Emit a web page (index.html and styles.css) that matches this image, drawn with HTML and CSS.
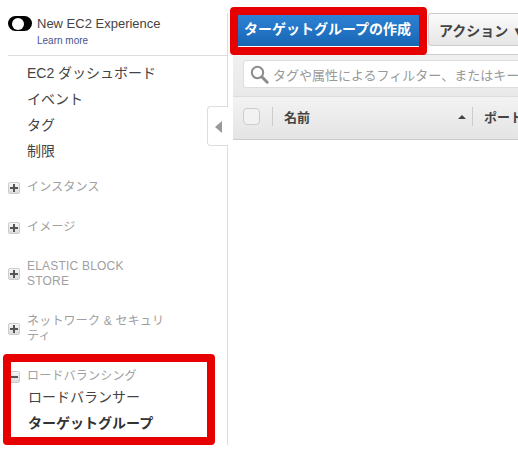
FILE: index.html
```html
<!DOCTYPE html>
<html lang="ja">
<head>
    <meta charset="UTF-8">
    <title>ターゲットグループ</title>
    <link rel="stylesheet" href="styles.css">
</head>
<body>
    <div class="page">
        <aside class="sidebar">
            <div class="experience">
                <span class="toggle"><span class="toggle-knob"></span></span>
                <div>
                    <div class="experience-title">New EC2 Experience</div>
                    <div class="experience-link">Learn more</div>
                </div>
            </div>

            <nav class="top-links">
                <div class="nav-link">EC2 ダッシュボード</div>
                <div class="nav-link">イベント</div>
                <div class="nav-link">タグ</div>
                <div class="nav-link">制限</div>
            </nav>

            <div class="nav-group group-instances">
                <span class="expander plus"></span>
                <span class="group-label">インスタンス</span>
            </div>
            <div class="nav-group group-images">
                <span class="expander plus"></span>
                <span class="group-label">イメージ</span>
            </div>
            <div class="nav-group group-ebs">
                <span class="expander plus"></span>
                <span class="group-label">ELASTIC BLOCK<br>STORE</span>
            </div>
            <div class="nav-group group-network">
                <span class="expander plus"></span>
                <span class="group-label">ネットワーク &amp; セキュリ<br>ティ</span>
            </div>
            <div class="nav-group group-lb">
                <span class="expander minus"></span>
                <span class="group-label">ロードバランシング</span>
            </div>
            <div class="nav-link sub-link">ロードバランサー</div>
            <div class="nav-link sub-link current">ターゲットグループ</div>
        </aside>

        <main class="content">
            <div class="toolbar">
                <button class="btn-create">ターゲットグループの作成</button>
                <button class="btn-actions">アクション<span class="caret">▾</span></button>
            </div>
            <div class="filter-bar">
                <div class="filter-input">
                    <svg class="search-icon" width="19" height="19" viewBox="0 0 19 19">
                        <circle cx="7.5" cy="7.5" r="5.7" fill="none" stroke="#8c8c8c" stroke-width="2"/>
                        <path d="M12 12l5.2 5.2" stroke="#8c8c8c" stroke-width="3" stroke-linecap="round"/>
                    </svg>
                    <span class="filter-text">タグや属性によるフィルター、またはキーワードによる検索</span>
                </div>
            </div>
            <div class="table-head">
                <span class="checkbox"></span>
                <span class="col-sep"></span>
                <span class="col-name">名前</span>
                <span class="sort-arrow"></span>
                <span class="col-sep col-sep-near"></span>
                <span class="col-port">ポート</span>
            </div>
        </main>
    </div>

    <div class="collapse-tab"><span class="collapse-arrow"></span></div>
    <div class="mark mark-create"></div>
    <div class="mark mark-nav"></div>
</body>
</html>
```

FILE: styles.css
```css
body {
    margin: 0;
    background: #fff;
    font-family: "Liberation Sans", "Noto Sans CJK JP", sans-serif;
    color: #444;
    overflow: hidden;
}

.page {
    display: flex;
    width: 518px;
    height: 449px;
    overflow: hidden;
}

.sidebar {
    flex: none;
    box-sizing: border-box;
    width: 228px;
    height: 432px;
    margin-top: 13px;
    border-right: 1px solid #ddd;
}

.experience {
    display: flex;
    gap: 5px;
    margin-left: 8px;
    height: 42px;
    border-bottom: 1px solid #ddd;
}

.toggle {
    flex: none;
    display: flex;
    align-items: center;
    box-sizing: border-box;
    width: 24px;
    height: 15px;
    margin-top: 3px;
    padding-left: 4px;
    background: #000;
    border-radius: 8px;
}

.toggle-knob {
    display: block;
    width: 12px;
    height: 12px;
    background: #fff;
    border-radius: 50%;
}

.experience-title {
    font-size: 13px;
    line-height: 21px;
    color: #444;
}

.experience-link {
    font-size: 10px;
    line-height: 12px;
    margin-top: 1px;
    color: #45558f;
}

.top-links {
    padding-top: 4px;
}

.nav-link {
    padding-left: 27px;
    font-size: 14px;
    line-height: 26px;
    color: #444;
}

.nav-group {
    display: flex;
    align-items: center;
    gap: 7px;
    padding-left: 8px;
}

.group-instances { margin-top: 16px; }
.group-images { margin-top: 25px; }
.group-ebs { margin-top: 24px; }
.group-network { margin-top: 25px; }
.group-lb { margin-top: 25px; }

.expander {
    flex: none;
    box-sizing: border-box;
    width: 12px;
    height: 12px;
    border: 1px solid #ccc;
    border-radius: 2px;
}

.plus {
    background:
        linear-gradient(#555, #555) center / 8px 2px no-repeat,
        linear-gradient(#555, #555) center / 2px 8px no-repeat,
        linear-gradient(#f6f6f6, #ddd);
}

.minus {
    background:
        linear-gradient(#555, #555) center / 8px 2px no-repeat,
        linear-gradient(#f6f6f6, #ddd);
}

.group-label {
    font-size: 12px;
    line-height: 15px;
    color: #a0a0a0;
    letter-spacing: 0.2px;
}

.sub-link {
    padding-left: 28px;
}

.current {
    font-weight: bold;
    color: #333;
}

.content {
    flex: none;
    width: 290px;
    margin-left: 5px;
}

.toolbar {
    display: flex;
    gap: 9px;
    height: 55px;
    padding-top: 13px;
    box-sizing: border-box;
    border-bottom: 1px solid #ccc;
}

.btn-create {
    flex: none;
    width: 181px;
    height: 33px;
    margin-left: 5px;
    padding: 0 2px 3px 0;
    border: none;
    background: linear-gradient(#2f84d6, #1866b4);
    color: #fff;
    font-family: inherit;
    font-size: 14px;
    font-weight: bold;
}

.btn-actions {
    flex: none;
    width: 110px;
    height: 33px;
    padding: 0 0 0 10px;
    border: 1px solid #ccc;
    border-radius: 3px;
    background: linear-gradient(#fbfbfb, #e6e6e6);
    color: #444;
    font-family: inherit;
    font-size: 14px;
    font-weight: bold;
    text-align: left;
    white-space: nowrap;
    overflow: hidden;
}

.caret {
    margin-left: 7px;
}

.filter-bar {
    box-sizing: border-box;
    height: 42px;
    padding: 5px 0 0 10px;
    background: linear-gradient(#f0f0f0, #e9e9e9);
    border-bottom: 1px solid #ddd;
}

.filter-input {
    display: flex;
    align-items: center;
    gap: 4px;
    box-sizing: border-box;
    width: 300px;
    height: 28px;
    padding-left: 6px;
    background: #fff;
    border: 1px solid #ddd;
    border-radius: 3px;
    overflow: hidden;
}

.search-icon {
    flex: none;
}

.filter-text {
    font-size: 13px;
    color: #999;
    white-space: nowrap;
}

.table-head {
    display: flex;
    align-items: center;
    box-sizing: border-box;
    height: 43px;
    padding: 0 0 3px 10px;
    background: linear-gradient(#f3f3f3, #e4e4e4);
    border-bottom: 1px solid #ccc;
    white-space: nowrap;
    overflow: hidden;
}

.checkbox {
    flex: none;
    box-sizing: border-box;
    width: 17px;
    height: 17px;
    background: #f2f2f2;
    border: 1px solid #ccc;
    border-radius: 4px;
}

.col-sep {
    flex: none;
    width: 1px;
    height: 19px;
    margin-left: 12px;
    background: #ccc;
}

.col-sep-near {
    margin-left: 6px;
}

.col-name {
    flex: none;
    width: 172px;
    margin-left: 11px;
    font-size: 13px;
    font-weight: bold;
    color: #444;
}

.sort-arrow {
    flex: none;
    width: 0;
    height: 0;
    margin-left: 2px;
    border-left: 4px solid transparent;
    border-right: 4px solid transparent;
    border-bottom: 4px solid #444;
}

.col-port {
    margin-left: 11px;
    font-size: 13px;
    font-weight: bold;
    color: #444;
}

/* サイドバーの折りたたみタブ */
.collapse-tab {
    position: absolute;
    left: 207px;
    top: 106px;
    width: 21px;
    height: 40px;
    box-sizing: border-box;
    background: #fff;
    border: 1px solid #ddd;
    border-right: none;
    border-radius: 4px 0 0 4px;
}

.collapse-arrow {
    position: absolute;
    left: 7px;
    top: 14px;
    border-top: 6px solid transparent;
    border-bottom: 6px solid transparent;
    border-right: 7px solid #999;
}

/* 赤枠の注釈 */
.mark {
    position: absolute;
    box-sizing: border-box;
    border: 8px solid #e60000;
    border-radius: 4px;
}

.mark-create {
    left: 230px;
    top: 7px;
    width: 197px;
    height: 48px;
}

.mark-nav {
    left: 3px;
    top: 354px;
    width: 212px;
    height: 91px;
}
```
